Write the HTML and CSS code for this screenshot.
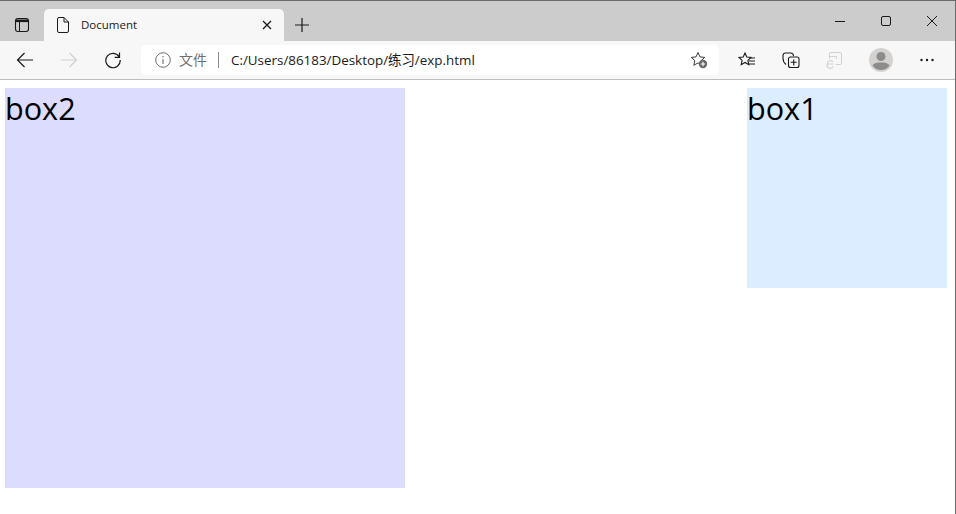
FILE: index.html
```html
<!DOCTYPE html>
<html lang="zh-CN">
<head>
    <meta charset="UTF-8">
    <title>Document</title>
    <link rel="stylesheet" href="styles.css">
</head>
<body>
<div class="window">
    <header class="titlebar">
        <div class="tab_actions">
            <svg class="icon" width="16" height="16" viewBox="0 0 16 16"><rect x="1.5" y="1.5" width="13" height="13" rx="2.5" fill="none" stroke="#1a1a1a" stroke-width="1.1"/><path d="M2 2.5h12v2.600H2z" fill="#1a1a1a"/><path d="M5.500 5v9" stroke="#1a1a1a" stroke-width="1"/></svg>
        </div>
        <div class="tab">
            <svg class="icon" width="14" height="16" viewBox="0 0 14 16"><path d="M1.500 2a1.500 1.500 0 0 1 1.500-1.500h5l4.500 4.500v9a1.500 1.500 0 0 1-1.500 1.500H3a1.500 1.500 0 0 1-1.500-1.500zM8 .5V5h4.500" fill="none" stroke="#1a1a1a" stroke-width="1"/></svg>
            <span class="tab_title">Document</span>
            <svg class="icon tab_close" width="10" height="10" viewBox="0 0 10 10"><path d="M1 1l8 8M9 1l-8 8" stroke="#1a1a1a" stroke-width="1.300"/></svg>
        </div>
        <svg class="icon new_tab" width="16" height="16" viewBox="0 0 16 16"><path d="M8 1v14M1 8h14" stroke="#1a1a1a" stroke-width="1.200"/></svg>
        <div class="window_controls">
            <svg class="icon" width="12" height="12" viewBox="0 0 12 12"><path d="M1 6.500h10" stroke="#1a1a1a" stroke-width="1"/></svg>
            <svg class="icon" width="12" height="12" viewBox="0 0 12 12"><rect x="1.500" y="1.500" width="9" height="9" rx="1.500" fill="none" stroke="#1a1a1a" stroke-width="1"/></svg>
            <svg class="icon" width="12" height="12" viewBox="0 0 12 12"><path d="M1 1l10 10M11 1L1 11" stroke="#1a1a1a" stroke-width="1"/></svg>
        </div>
    </header>
    <nav class="toolbar">
        <div class="nav_buttons">
            <svg class="icon" width="18" height="16" viewBox="0 0 18 16"><path d="M17 8H1.500M8.500 1l-7 7 7 7" fill="none" stroke="#1a1a1a" stroke-width="1.200"/></svg>
            <svg class="icon" width="18" height="16" viewBox="0 0 18 16"><path d="M1 8h15.500M9.500 1l7 7-7 7" fill="none" stroke="#cfcfcf" stroke-width="1.200"/></svg>
            <svg class="icon" width="18" height="18" viewBox="0 0 18 18"><path d="M15.500 1.500v4.800h-4.800M15.300 6A7.200 7.200 0 1 0 16.200 9" fill="none" stroke="#1a1a1a" stroke-width="1.200"/></svg>
        </div>
        <div class="address">
            <svg class="icon" width="16" height="16" viewBox="0 0 16 16"><circle cx="8" cy="8" r="7.300" fill="none" stroke="#6f6f6f" stroke-width="1"/><path d="M8 7v5M8 4v1.500" stroke="#6f6f6f" stroke-width="1.100"/></svg>
            <span class="scheme">文件</span>
            <span class="divider"></span>
            <span class="url">C:/Users/86183/Desktop/练习/exp.html</span>
            <svg class="icon fav_add" width="18" height="18" viewBox="0 0 18 18"><path d="M8 1.500l2 4.400 4.700.5-3.500 3.200 1 4.700L8 11.900l-4.200 2.400 1-4.700L1.300 6.400 6 5.900z" fill="none" stroke="#3a3a3a" stroke-width="1"/><circle cx="13" cy="13" r="4.200" fill="#666"/><path d="M13 10.800v4.400M10.800 13h4.400" stroke="#fff" stroke-width="1.100"/></svg>
        </div>
        <div class="tools">
            <svg class="icon" width="18" height="18" viewBox="0 0 18 18"><path d="M7 2l1.800 4 4.200.5-3.100 2.900.9 4.300L7 11.500l-3.800 2.200.9-4.300L1 6.500 5.200 6z" fill="none" stroke="#1a1a1a" stroke-width="1.100"/><path d="M12 7h5M11 10h6M10.500 13h6.500" stroke="#1a1a1a" stroke-width="1"/></svg>
            <svg class="icon" width="18" height="18" viewBox="0 0 18 18"><path d="M4 13.500C2 12 1 10 1 7V4.500A2.500 2.500 0 0 1 3.500 2h5A3 3 0 0 1 11.500 5" fill="none" stroke="#1a1a1a" stroke-width="1.100"/><rect x="6.500" y="6" width="10.500" height="10.500" rx="2" fill="#f7f7f7" stroke="#1a1a1a" stroke-width="1.100"/><path d="M11.750 8.500v6M8.700 11.250h6" stroke="#1a1a1a" stroke-width="1.100"/></svg>
            <svg class="icon" width="18" height="18" viewBox="0 0 18 18"><path d="M3.500 8V3a1.500 1.500 0 0 1 1.500-1.500h9A1.500 1.500 0 0 1 15.500 3v9a1.500 1.500 0 0 1-1.500 1.500H10M3.500 5.500h7V8" fill="none" stroke="#d2d2d2" stroke-width="1"/><path d="M7.500 13H1.500a3 3 0 0 1 5.500-2M7 15.500a3 3 0 0 1-5.500-2.500" fill="none" stroke="#d2d2d2" stroke-width="1.200"/></svg>
            <div class="avatar">
                <svg width="24" height="24" viewBox="0 0 24 24"><circle cx="12" cy="12" r="12" fill="#d3d2d0"/><circle cx="12" cy="8.500" r="4.500" fill="#8e8c8a"/><path d="M3.500 17.500C5 15 8 14.500 12 14.500s7 .5 8.500 3C18.500 20.500 15.500 22 12 22s-6.500-1.500-8.500-4.500z" fill="#8e8c8a"/></svg>
            </div>
            <svg class="icon" width="16" height="16" viewBox="0 0 16 16"><circle cx="2.500" cy="8" r="1.200" fill="#1a1a1a"/><circle cx="8" cy="8" r="1.200" fill="#1a1a1a"/><circle cx="13.500" cy="8" r="1.200" fill="#1a1a1a"/></svg>
        </div>
    </nav>
    <main class="page">
        <div class="box box2">box2</div>
        <div class="box box1">box1</div>
    </main>
</div>
</body>
</html>
```

FILE: styles.css
```css
html, body {
    margin: 0;
    padding: 0;
}
body {
    width: 956px;
    height: 514px;
    overflow: hidden;
    background: #fff;
    font-family: "Open Sans", "Noto Sans CJK SC", sans-serif;
}
.window {
    box-sizing: border-box;
    height: 514px;
    border-top: 1px solid #6a6a6a;
    border-right: 1px solid #6a6a6a;
}
.icon {
    display: block;
    flex: none;
}
.titlebar {
    display: flex;
    align-items: center;
    height: 40px;
    background-color: #cccccc;
}
.tab_actions {
    width: 44px;
    margin-top: 8px;
    display: flex;
    justify-content: center;
}
.tab {
    display: flex;
    align-items: center;
    box-sizing: border-box;
    width: 240px;
    height: 32px;
    margin-top: 8px;
    padding: 0 12px;
    border-radius: 5px 5px 0 0;
    background-color: #f7f7f7;
}
.tab_title {
    flex: 1;
    margin-left: 11px;
    padding-bottom: 1px;
    font-size: 11.5px;
    color: #1a1a1a;
}
.new_tab {
    margin: 8px 0 0 10px;
}
.window_controls {
    margin-left: auto;
    display: flex;
    gap: 34px;
    padding-right: 17px;
}
.toolbar {
    display: flex;
    align-items: center;
    box-sizing: border-box;
    height: 39px;
    border-bottom: 1px solid #bdbdbd;
    background-color: #f7f7f7;
}
.nav_buttons {
    display: flex;
    align-items: center;
    gap: 26px;
    padding-left: 16px;
    width: 125px;
    box-sizing: border-box;
}
.address {
    display: flex;
    align-items: center;
    box-sizing: border-box;
    width: 578px;
    height: 30px;
    margin-left: 16px;
    padding: 0 11px 2px 14px;
    border-radius: 5px;
    background-color: #fff;
}
.address .icon {
    margin-top: 2px;
}
.scheme {
    margin-left: 8px;
    font-size: 14px;
    color: #6f6f6f;
}
.divider {
    width: 1px;
    height: 16px;
    margin: 2px 12px 0 11px;
    background-color: #8a8a8a;
}
.url {
    flex: 1;
    font-size: 13.4px;
    color: #1a1a1a;
}
.tools {
    display: flex;
    align-items: center;
    gap: 26px;
    margin-left: 19px;
}
.avatar {
    width: 24px;
    height: 24px;
    margin-left: -1px;
}
.avatar svg {
    display: block;
}
.page {
    display: flex;
    justify-content: space-between;
    align-items: flex-start;
    padding: 8px 8px 0 5px;
}
.box {
    font-size: 30.6px;
    line-height: 40px;
    color: #000;
}
.box1 {
    width: 200px;
    height: 200px;
    background-color: #dcedff;
}
.box2 {
    width: 400px;
    height: 400px;
    background-color: #dcdcff;
}
```
